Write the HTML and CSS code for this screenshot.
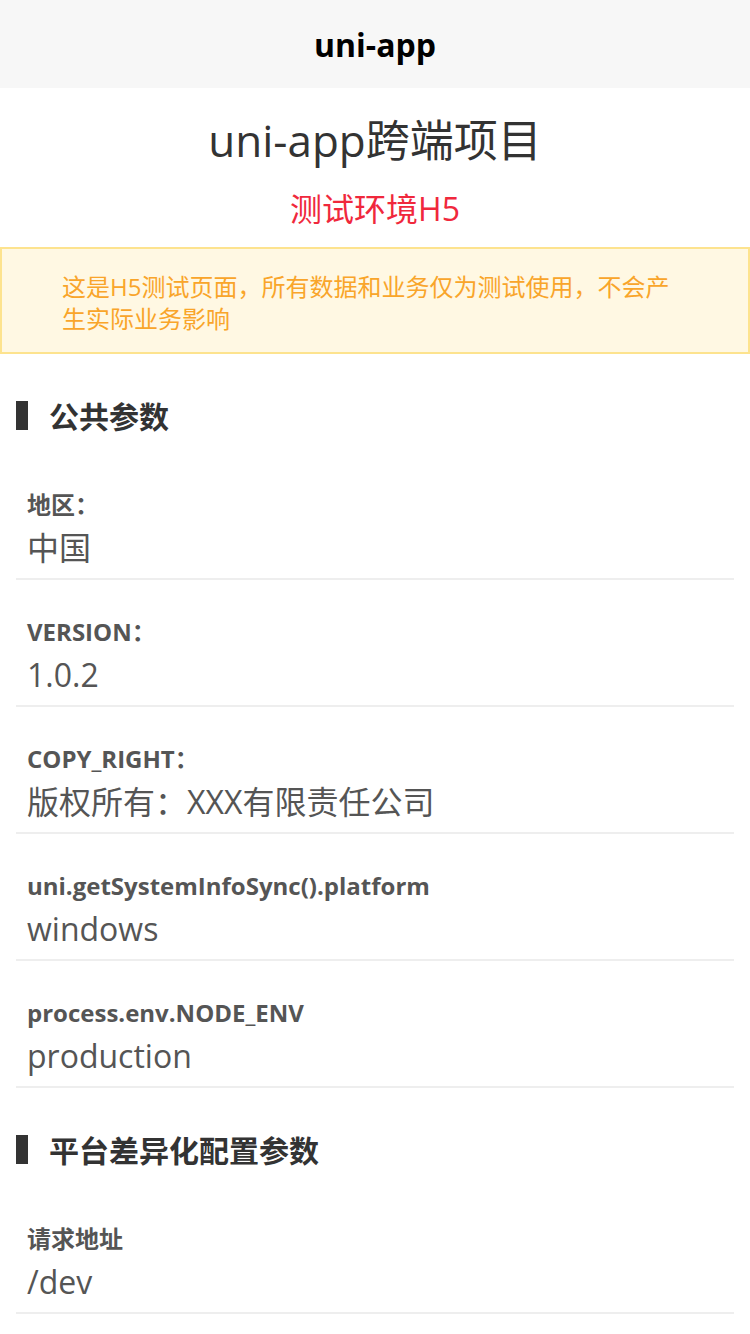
FILE: index.html
```html
<!DOCTYPE html>
<html lang="zh-CN">
<head>
<meta charset="utf-8">
<title>uni-app</title>
<link rel="stylesheet" href="styles.css">
</head>
<body>
<header class="navbar"><span class="navbar-title">uni-app</span></header>
<main class="page">
  <h1 class="title">uni-app跨端项目</h1>
  <p class="env">测试环境H5</p>
  <div class="notice">这是H5测试页面，所有数据和业务仅为测试使用，不会产生实际业务影响</div>

  <section class="section first">
    <h2 class="section-title"><span class="bar"></span>公共参数</h2>
    <div class="item"><div class="label">地区：</div><div class="value">中国</div></div>
    <div class="item"><div class="label">VERSION：</div><div class="value">1.0.2</div></div>
    <div class="item"><div class="label">COPY_RIGHT：</div><div class="value">版权所有：XXX有限责任公司</div></div>
    <div class="item"><div class="label">uni.getSystemInfoSync().platform</div><div class="value">windows</div></div>
    <div class="item"><div class="label">process.env.NODE_ENV</div><div class="value">production</div></div>
  </section>

  <section class="section">
    <h2 class="section-title"><span class="bar"></span>平台差异化配置参数</h2>
    <div class="item"><div class="label">请求地址</div><div class="value">/dev</div></div>
  </section>
</main>
</body>
</html>
```
FILE: styles.css
```css
html, body {
  margin: 0;
  padding: 0;
  background: #ffffff;
}
body {
  font-family: "Open Sans", "Noto Sans CJK SC", sans-serif;
  color: #333333;
}
.navbar {
  height: 88px;
  background: #f7f7f7;
  display: flex;
  align-items: center;
  justify-content: center;
}
.navbar-title {
  font-size: 32px;
  font-weight: 700;
  color: #000000;
}
.page {
  display: flex;
  flex-direction: column;
}
.title {
  margin: 0;
  margin-top: 24px;
  font-size: 44px;
  font-weight: 400;
  line-height: 56px;
  text-align: center;
  color: #333333;
}
.env {
  margin: 0;
  margin-top: 19px;
  font-size: 32px;
  line-height: 44px;
  text-align: center;
  color: #f0283c;
}
.notice {
  margin-top: 16px;
  background: #fff8e3;
  border: 2px solid #fde38e;
  padding: 22px 60px 17px 60px;
  font-size: 24px;
  line-height: 32px;
  color: #f9a52a;
}
.section {
  margin-top: 23px;
  padding: 0 16px;
}
.section-title {
  margin: 0;
  height: 76px;
  display: flex;
  align-items: center;
  font-size: 30px;
  font-weight: 700;
  color: #333333;
}
.bar {
  width: 12px;
  height: 29px;
  background: #333333;
  margin-right: 21px;
}
.item {
  padding: 37px 11px 6px 11px;
  border-bottom: 2px solid #eeeeee;
}
.label {
  font-size: 24px;
  line-height: 30px;
  font-weight: 700;
  color: #555555;
}
.value {
  margin-top: 4px;
  font-size: 32px;
  line-height: 48px;
  color: #555555;
}
```
